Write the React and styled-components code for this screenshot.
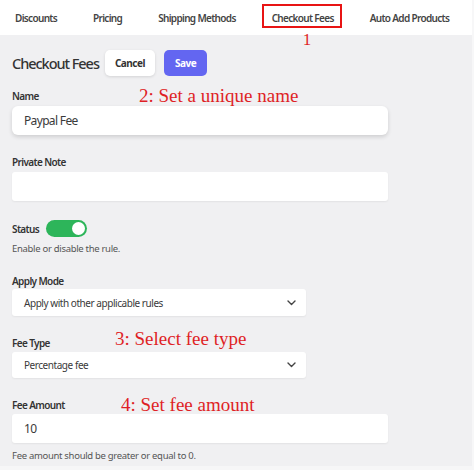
import React from "react";
import styled, { createGlobalStyle } from "styled-components";

const Global = createGlobalStyle`
  html, body { margin: 0; padding: 0; }
  body {
    background: #f0f0f2;
    font-family: "Noto Sans", "Open Sans", sans-serif;
    color: #333;
  }
`;

const Page = styled.div`
  width: 474px;
  height: 470px;
  background: #f0f0f2;
  overflow: hidden;
  box-sizing: border-box;
  border-right: 2px solid #f7f7f8;
  border-bottom: 4px solid #f6f6f7;
`;

const TabBar = styled.div`
  height: 35px;
  background: #fff;
  display: flex;
  align-items: center;
  gap: 36px;
  padding-left: 15px;
`;

const Tab = styled.div`
  position: relative;
  font-size: 10px;
  font-weight: 600;
  letter-spacing: -0.067em;
  color: #444;
  white-space: nowrap;
  ${(p) =>
    p.$active &&
    `
    &::before {
      content: "";
      position: absolute;
      left: -10px;
      right: -8px;
      top: -7px;
      height: 24px;
      border: 2px solid #e81414;
      box-sizing: border-box;
    }
  `}
`;

const Annotation = styled.span`
  position: absolute;
  left: ${(p) => p.$left};
  top: ${(p) => p.$top}px;
  font-family: "Liberation Serif", "Times New Roman", serif;
  font-size: ${(p) => p.$size || 19}px;
  line-height: 1;
  letter-spacing: 0;
  color: #df1f26;
  white-space: nowrap;
  font-weight: 400;
`;

const Content = styled.div`
  padding: 15px 12px 0 12px;
`;

const Header = styled.div`
  display: flex;
  align-items: center;
  height: 26px;
`;

const Title = styled.h2`
  margin: 0 6px 0 0;
  font-size: 14.5px;
  font-weight: 500;
  letter-spacing: -0.072em;
  color: #333;
`;

const Button = styled.button`
  height: 26px;
  border: none;
  border-radius: 5px;
  padding: 0 ${(p) => (p.$primary ? 11 : 10)}px;
  margin-right: ${(p) => (p.$primary ? 0 : 9)}px;
  font-family: inherit;
  font-size: 10px;
  font-weight: 700;
  letter-spacing: -0.05em;
  background: ${(p) => (p.$primary ? "#6366f1" : "#fff")};
  color: ${(p) => (p.$primary ? "#fff" : "#333")};
  box-shadow: ${(p) =>
    p.$primary ? "none" : "0 1px 3px rgba(0,0,0,0.12)"};
`;

const Form = styled.div`
  display: flex;
  flex-direction: column;
  margin-top: 13px;
  gap: 19px;
`;

const Field = styled.div`
  display: flex;
  flex-direction: column;
  gap: ${(p) => p.$gap ?? 3}px;
  margin-top: ${(p) => p.$mt ?? 0}px;
`;

const LabelRow = styled.div`
  position: relative;
  display: flex;
  align-items: center;
  gap: 7px;
  height: ${(p) => p.$h ?? 14}px;
`;

const Label = styled.label`
  font-size: 10px;
  font-weight: 600;
  letter-spacing: -0.062em;
  color: #333;
`;

const Input = styled.div`
  width: ${(p) => p.$w}px;
  height: ${(p) => p.$h}px;
  box-sizing: border-box;
  background: #fff;
  border-radius: ${(p) => (p.$focus ? 6 : 3)}px;
  box-shadow: ${(p) =>
    p.$focus
      ? "0 2px 4px rgba(0,0,0,0.14)"
      : "0 1px 2px rgba(0,0,0,0.06)"};
  display: flex;
  align-items: center;
  justify-content: space-between;
  padding: 0 10px 0 12px;
  font-size: ${(p) => p.$fs || 12}px;
  letter-spacing: ${(p) => (p.$fs ? "-0.045em" : "-0.055em")};
  color: #3a3a3a;
`;

const Toggle = styled.div`
  width: 41px;
  height: 17px;
  border-radius: 9px;
  background: #2db55a;
  position: relative;
  &::after {
    content: "";
    position: absolute;
    right: 2px;
    top: 2px;
    width: 13px;
    height: 13px;
    border-radius: 50%;
    background: #fff;
  }
`;

const Help = styled.div`
  font-size: 9.5px;
  letter-spacing: -0.032em;
  color: #555;
  height: 14px;
  line-height: 14px;
  margin-top: ${(p) => p.$mt ?? 0}px;
`;

const Chevron = () => (
  <svg width="9" height="6" viewBox="0 0 9 6" fill="none">
    <path d="M1 1l3.5 3.5L8 1" stroke="#444" strokeWidth="1.4" strokeLinecap="round" strokeLinejoin="round" />
  </svg>
);

export default function App() {
  return (
    <Page>
      <Global />
      <TabBar>
        <Tab>Discounts</Tab>
        <Tab>Pricing</Tab>
        <Tab>Shipping Methods</Tab>
        <Tab $active>
          Checkout Fees
          <Annotation $left="50%" $top={20} $size={17}>1</Annotation>
        </Tab>
        <Tab>Auto Add Products</Tab>
      </TabBar>
      <Content>
        <Header>
          <Title>Checkout Fees</Title>
          <Button>Cancel</Button>
          <Button $primary>Save</Button>
        </Header>
        <Form>
          <Field>
            <LabelRow>
              <Label>Name</Label>
              <Annotation $left="127px" $top={-3}>2: Set a unique name</Annotation>
            </LabelRow>
            <Input $w={376} $h={29} $focus>Paypal Fee</Input>
          </Field>
          <Field $mt={1}>
            <LabelRow>
              <Label>Private Note</Label>
            </LabelRow>
            <Input $w={376} $h={29} />
          </Field>
          <Field $gap={3}>
            <LabelRow $h={17}>
              <Label>Status</Label>
              <Toggle />
            </LabelRow>
            <Help $mt={2}>Enable or disable the rule.</Help>
          </Field>
          <Field $gap={1} $mt={-1}>
            <LabelRow>
              <Label>Apply Mode</Label>
            </LabelRow>
            <Input $w={294} $h={27} $fs={10}>
              Apply with other applicable rules
              <Chevron />
            </Input>
          </Field>
          <Field $gap={2} $mt={1}>
            <LabelRow>
              <Label>Fee Type</Label>
              <Annotation $left="103px" $top={-7}>3: Select fee type</Annotation>
            </LabelRow>
            <Input $w={294} $h={26} $fs={10}>
              Percentage fee
              <Chevron />
            </Input>
          </Field>
          <Field $gap={2} $mt={1}>
            <LabelRow>
              <Label>Fee Amount</Label>
              <Annotation $left="109px" $top={-3}>4: Set fee amount</Annotation>
            </LabelRow>
            <Input $w={376} $h={29}>10</Input>
            <Help $mt={4}>Fee amount should be greater or equal to 0.</Help>
          </Field>
        </Form>
      </Content>
    </Page>
  );
}
